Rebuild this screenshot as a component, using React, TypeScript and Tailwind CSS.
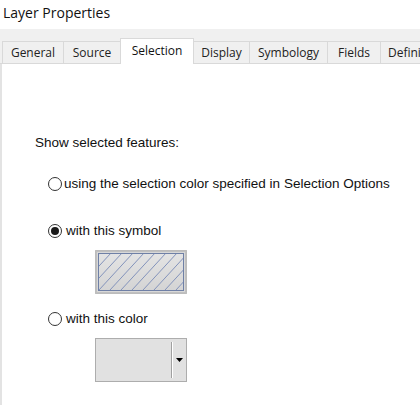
import React from "react";

const tabs = [
  { name: "General", w: "w-[62px]" },
  { name: "Source", w: "w-[58px]" },
  { name: "Selection", w: "w-[74px]", active: true },
  { name: "Display", w: "w-[57px]" },
  { name: "Symbology", w: "w-[79px]" },
  { name: "Fields", w: "w-[54px]" },
  { name: "Definition Query", w: "w-[120px]" },
];

function Radio({ checked }: { checked?: boolean }) {
  return (
    <span className="flex items-center justify-center w-[14px] h-[14px] rounded-full border border-[#333333] bg-white shrink-0">
      {checked && <span className="block w-[8px] h-[8px] rounded-full bg-[#1a1a1a]" />}
    </span>
  );
}

function HatchSymbol() {
  const lines = [];
  for (let i = -40; i < 100; i += 11) {
    lines.push(<line key={i} x1={i} y1={40} x2={i + 34} y2={3} stroke="#8393bb" strokeWidth="1" />);
  }
  return (
    <svg width="92" height="44" viewBox="0 0 92 44">
      <defs>
        <linearGradient id="hatchbg" x1="0" y1="0" x2="0" y2="1">
          <stop offset="0" stopColor="#e4e4e4" />
          <stop offset="1" stopColor="#d4d4d4" />
        </linearGradient>
        <clipPath id="inner">
          <rect x="3" y="3" width="86" height="38" />
        </clipPath>
      </defs>
      <rect x="0.5" y="0.5" width="91" height="43" fill="#d8d8d8" stroke="#8c8c8c" strokeDasharray="1 1" />
      <rect x="1.5" y="1.5" width="89" height="41" fill="none" stroke="#a8a8a8" strokeDasharray="1 1" />
      <rect x="3" y="3" width="86" height="38" fill="url(#hatchbg)" />
      <g clipPath="url(#inner)">{lines}</g>
      <rect x="3.5" y="3.5" width="85" height="37" fill="none" stroke="#6f80a6" />
    </svg>
  );
}

export default function App() {
  return (
    <div className="w-[420px] h-[405px] bg-white overflow-hidden text-black">
      <div className="h-[29px] pl-[3px] pt-[2px] text-[14px] font-['Open_Sans',sans-serif] text-[#111]">
        Layer Properties
      </div>

      {/* tab strip */}
      <div className="h-[35px] bg-[#f0f0f0] flex items-end pl-[2px] border-b border-[#d9d9d9] font-['Open_Sans',sans-serif] text-[12px]">
        {tabs.map((t, i) =>
          t.active ? (
            <div
              key={t.name}
              className={`${t.w} h-[26px] -mb-px -ml-px bg-white border border-b-0 border-[#d9d9d9] flex items-center justify-center shrink-0 text-[#111] pb-[2px]`}
            >
              {t.name}
            </div>
          ) : (
            <div
              key={t.name}
              className={`${t.w} h-[22px] ${i === 0 ? "" : "-ml-px"} bg-[#f0f0f0] border border-b-0 border-[#d9d9d9] flex items-center justify-center shrink-0 text-[#222] whitespace-nowrap overflow-hidden ${t.name === "Definition Query" ? "justify-start pl-[7px]" : ""}`}
            >
              {t.name}
            </div>
          )
        )}
      </div>

      {/* panel */}
      <div className="h-[341px] border-l-2 border-[#e3e3e3] font-['Liberation_Sans',Arial,sans-serif] text-[13.5px] text-[#111]">
        <div className="pt-[71px] pl-[33px] leading-[15px]">Show selected features:</div>

        <div className="mt-[26px] pl-[46px] flex items-center gap-[2px] leading-[15px]">
          <Radio />
          <span>using the selection color specified in Selection Options</span>
        </div>

        <div className="mt-[32px] pl-[46px] flex items-center gap-[4px] leading-[15px]">
          <Radio checked />
          <span>with this symbol</span>
        </div>
        <div className="mt-[12px] pl-[93px]">
          <HatchSymbol />
        </div>

        <div className="mt-[17px] pl-[46px] flex items-center gap-[4px] leading-[15px]">
          <Radio />
          <span>with this color</span>
        </div>
        <div className="mt-[12px] ml-[93px] w-[92px] h-[44px] bg-[#e1e1e1] border border-[#adadad] flex justify-end">
          <div className="my-[3px] w-[2px] border-l border-[#a0a0a0] bg-white" />
          <div className="w-[13px] flex items-center justify-center">
            <svg width="7" height="4" viewBox="0 0 7 4">
              <path d="M0 0h7L3.5 4z" fill="#000" />
            </svg>
          </div>
        </div>
      </div>
    </div>
  );
}
